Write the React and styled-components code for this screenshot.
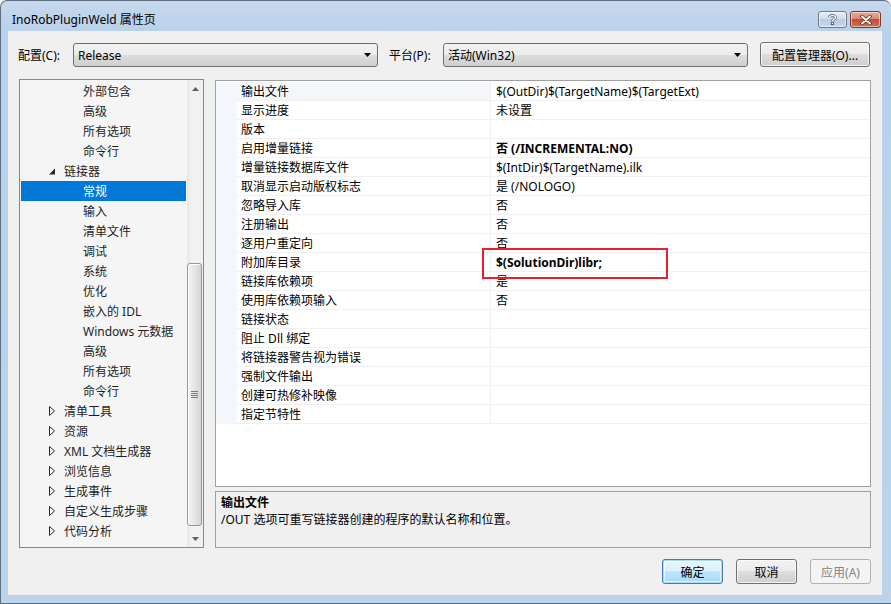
import React from "react";
import styled, { createGlobalStyle, css } from "styled-components";

const GlobalStyle = createGlobalStyle`
  html, body { margin: 0; padding: 0; background: #fff; }
  body {
    font-family: "Noto Sans", "Noto Sans CJK SC", sans-serif;
    font-size: 12px;
    color: #000;
  }
`;

const Window = styled.div`
  width: 891px;
  height: 604px;
  box-sizing: border-box;
  background: linear-gradient(#c6d8ed, #b9d1ea 30px, #bcd3ec);
  border: 1px solid #5d6e81;
  border-right: none;
  border-radius: 7px 7px 0 0;
  padding: 0 9px 8px 7px;
  display: flex;
  flex-direction: column;
`;

const TitleBar = styled.div`
  height: 30px;
  display: flex;
  align-items: flex-start;
`;

const Title = styled.div`
  flex: 1;
  padding: 10px 0 0 4px;
  line-height: 18px;
  font-size: 12px;
  color: #000;
`;

const CaptionButton = styled.div`
  margin-top: 10px;
  height: 17px;
  box-sizing: border-box;
  border: 1px solid #6d7b8c;
  border-radius: 3px;
  display: flex;
  align-items: center;
  justify-content: center;
  box-shadow: inset 0 0 0 1px rgba(255, 255, 255, 0.5);
  ${(p) =>
    p.$close
      ? css`
          width: 31px;
          margin-left: 3px;
          margin-right: 1px;
          background: linear-gradient(#e8a898, #d98c77 45%, #c34d32 50%, #d0725a);
          border-color: #7a3a2c;
        `
      : css`
          width: 29px;
          background: linear-gradient(#e4ecf6, #d2deec 45%, #b9cbe1 50%, #c9d8ea);
        `}
`;

const Client = styled.div`
  flex: 1;
  background: #f0f0f0;
  padding: 11px 11px 11px 11px;
  display: flex;
  flex-direction: column;
  min-height: 0;
`;

const ConfigRow = styled.div`
  height: 25px;
  display: flex;
  align-items: center;
`;

const FieldLabel = styled.div`
  width: ${(p) => p.$w}px;
  margin-left: ${(p) => p.$ml || 0}px;
  box-sizing: border-box;
  white-space: nowrap;
`;

const Combo = styled.div`
  width: 305px;
  height: 24px;
  box-sizing: border-box;
  border: 1px solid #707070;
  border-radius: 3px;
  background: linear-gradient(#f2f2f2, #ebebeb 50%, #dddddd 50%, #cfcfcf);
  display: flex;
  align-items: center;
  padding: 0 6px 0 4px;
  margin-top: 1px;
  span { flex: 1; }
`;

const Button = styled.div`
  width: ${(p) => p.$w || 61}px;
  height: 25px;
  margin-left: ${(p) => p.$ml || 0}px;
  box-sizing: border-box;
  border: 1px solid #707070;
  border-radius: 3px;
  background: linear-gradient(#f2f2f2, #ebebeb 50%, #dddddd 50%, #cfcfcf);
  box-shadow: inset 0 0 0 1px rgba(255, 255, 255, 0.7);
  display: flex;
  align-items: center;
  justify-content: center;
  white-space: nowrap;
  color: #000;
  ${(p) =>
    p.$primary &&
    css`
      border-color: #3c7fb1;
      background: linear-gradient(#eaf6fd, #d9f0fc 50%, #bee6fd 50%, #a7d9f5);
      box-shadow: inset 0 0 0 1px #a8dcf5, inset 0 0 0 2px rgba(255, 255, 255, 0.6);
    `}
  ${(p) =>
    p.$disabled &&
    css`
      border-color: #adb2b5;
      background: #f4f4f4;
      box-shadow: none;
      color: #838383;
    `}
`;

const Main = styled.div`
  flex: 1;
  min-height: 0;
  margin-top: 12px;
  display: flex;
`;

const Tree = styled.div`
  width: 185px;
  box-sizing: border-box;
  border: 1px solid #828790;
  background: #f5f5f5;
  display: flex;
`;

const TreeList = styled.div`
  flex: 1;
  padding: 1px 1px 0 1px;
  overflow: hidden;
`;

const TreeRow = styled.div`
  height: 20px;
  display: flex;
  align-items: center;
  padding-left: ${(p) => p.$indent}px;
  white-space: nowrap;
  color: ${(p) => (p.$selected ? "#fff" : "#1e1e1e")};
  background: ${(p) => (p.$selected ? "#0078d7" : "transparent")};
`;

const Expander = styled.span`
  width: 15px;
  display: flex;
  align-items: center;
`;

const ScrollBar = styled.div`
  width: 16px;
  display: flex;
  flex-direction: column;
  background: linear-gradient(to right, #e8e8e8, #f2f2f2 30%, #f0f0f0);
`;

const ScrollArrow = styled.div`
  height: ${(p) => p.$h}px;
  display: flex;
  align-items: center;
  justify-content: center;
`;

const ScrollTrack = styled.div`
  flex: 1;
  padding-top: 166px;
  box-sizing: border-box;
`;

const Thumb = styled.div`
  height: 263px;
  margin: 0 1px 0 0;
  box-sizing: border-box;
  border: 1px solid #979797;
  border-radius: 3px;
  background: linear-gradient(to right, #f4f4f4, #e6e6e6 50%, #d6d6d6);
  box-shadow: inset 1px 1px 0 #fff;
  display: flex;
  align-items: center;
  justify-content: center;
`;

const RightColumn = styled.div`
  flex: 1;
  margin-left: 11px;
  display: flex;
  flex-direction: column;
`;

const PropGrid = styled.div`
  position: relative;
  flex: 1;
  margin-top: 1px;
  border: 1px solid #a0a0a0;
  background: #fff;
  padding-top: 1px;
`;

const PropRow = styled.div`
  display: grid;
  grid-template-columns: 21px 253px 1fr;
  height: 19px;
`;

const Gutter = styled.div`
  background: #f3f6fb;
`;

const Cell = styled.div`
  box-sizing: border-box;
  border-bottom: 1px solid #f0f0f6;
  padding: 2px 0 0 ${(p) => (p.$value ? 5 : 4)}px;
  line-height: 16px;
  white-space: nowrap;
  overflow: hidden;
  font-weight: ${(p) => (p.$bold ? 700 : 400)};
  background: ${(p) => (p.$active ? "#f5f6f8" : "#fff")};
  ${(p) => p.$value && css`border-left: 1px solid #f0f0f6;`}
`;

const Highlight = styled.div`
  position: absolute;
  left: 266px;
  top: 167px;
  width: 186px;
  height: 31px;
  box-sizing: border-box;
  border: 2px solid #e8202a;
  pointer-events: none;
`;

const Desc = styled.div`
  height: 57px;
  margin-top: 4px;
  box-sizing: border-box;
  border: 1px solid #a0a0a0;
  background: #f0f0f0;
  padding: 2px 0 0 5px;
  line-height: 17px;
  h4 { margin: 0; font-size: 12px; font-weight: 700; }
  p { margin: 0; }
`;

const ButtonRow = styled.div`
  margin-top: 11px;
  height: 25px;
  display: flex;
  justify-content: flex-end;
`;

const treeItems = [
  { text: "外部包含", level: 2 },
  { text: "高级", level: 2 },
  { text: "所有选项", level: 2 },
  { text: "命令行", level: 2 },
  { text: "链接器", level: 1, open: true },
  { text: "常规", level: 2, selected: true },
  { text: "输入", level: 2 },
  { text: "清单文件", level: 2 },
  { text: "调试", level: 2 },
  { text: "系统", level: 2 },
  { text: "优化", level: 2 },
  { text: "嵌入的 IDL", level: 2 },
  { text: "Windows 元数据", level: 2 },
  { text: "高级", level: 2 },
  { text: "所有选项", level: 2 },
  { text: "命令行", level: 2 },
  { text: "清单工具", level: 1 },
  { text: "资源", level: 1 },
  { text: "XML 文档生成器", level: 1 },
  { text: "浏览信息", level: 1 },
  { text: "生成事件", level: 1 },
  { text: "自定义生成步骤", level: 1 },
  { text: "代码分析", level: 1 },
];

const props = [
  ["输出文件", "$(OutDir)$(TargetName)$(TargetExt)"],
  ["显示进度", "未设置"],
  ["版本", ""],
  ["启用增量链接", "否 (/INCREMENTAL:NO)", true],
  ["增量链接数据库文件", "$(IntDir)$(TargetName).ilk"],
  ["取消显示启动版权标志", "是 (/NOLOGO)"],
  ["忽略导入库", "否"],
  ["注册输出", "否"],
  ["逐用户重定向", "否"],
  ["附加库目录", "$(SolutionDir)libr;", true],
  ["链接库依赖项", "是"],
  ["使用库依赖项输入", "否"],
  ["链接状态", ""],
  ["阻止 Dll 绑定", ""],
  ["将链接器警告视为错误", ""],
  ["强制文件输出", ""],
  ["创建可热修补映像", ""],
  ["指定节特性", ""],
];

function DropArrow() {
  return (
    <svg width="7" height="4" viewBox="0 0 7 4">
      <polygon points="0,0 7,0 3.5,4" fill="#000" />
    </svg>
  );
}

function TreeItem({ item }) {
  if (item.level === 2) {
    return (
      <TreeRow $indent={62} $selected={item.selected}>
        {item.text}
      </TreeRow>
    );
  }
  return (
    <TreeRow $indent={28}>
      <Expander>
        {item.open ? (
          <svg width="7" height="7" viewBox="0 0 7 7">
            <polygon points="6,0.5 6,6.5 0,6.5" fill="#262626" />
          </svg>
        ) : (
          <svg width="7" height="10" viewBox="0 0 7 10">
            <polygon points="0.5,0.5 5.5,5 0.5,9.5" fill="#fff" stroke="#262626" strokeWidth="1" />
          </svg>
        )}
      </Expander>
      {item.text}
    </TreeRow>
  );
}

export default function App() {
  return (
    <>
      <GlobalStyle />
      <Window>
        <TitleBar>
          <Title>InoRobPluginWeld 属性页</Title>
          <CaptionButton>
            <svg width="9" height="11" viewBox="0 0 9 11">
              <path
                d="M1.5 3.2 C1.5 1.2 7.5 1 7.5 3.4 C7.5 5 4.5 5.2 4.5 7"
                fill="none"
                stroke="#3b4a5c"
                strokeWidth="2.6"
              />
              <path
                d="M1.5 3.2 C1.5 1.2 7.5 1 7.5 3.4 C7.5 5 4.5 5.2 4.5 7"
                fill="none"
                stroke="#fff"
                strokeWidth="1.4"
              />
              <rect x="3.3" y="8.2" width="2.4" height="2.4" fill="#fff" stroke="#3b4a5c" strokeWidth="0.8" />
            </svg>
          </CaptionButton>
          <CaptionButton $close>
            <svg width="12" height="10" viewBox="0 0 12 10">
              <path d="M2 1.5 L10 8.5 M10 1.5 L2 8.5" stroke="#5a2418" strokeWidth="3.4" strokeLinecap="round" />
              <path d="M2 1.5 L10 8.5 M10 1.5 L2 8.5" stroke="#fff" strokeWidth="2" strokeLinecap="round" />
            </svg>
          </CaptionButton>
        </TitleBar>
        <Client>
          <ConfigRow>
            <FieldLabel $w={55} $ml={-1}>配置(C):</FieldLabel>
            <Combo>
              <span>Release</span>
              <DropArrow />
            </Combo>
            <FieldLabel $w={54} $ml={11}>平台(P):</FieldLabel>
            <Combo>
              <span>活动(Win32)</span>
              <DropArrow />
            </Combo>
            <Button $w={110} $ml={12}>配置管理器(O)...</Button>
          </ConfigRow>
          <Main>
            <Tree>
              <TreeList>
                {treeItems.map((item, i) => (
                  <TreeItem key={i} item={item} />
                ))}
              </TreeList>
              <ScrollBar>
                <ScrollArrow $h={17}>
                  <svg width="7" height="4" viewBox="0 0 7 4">
                    <polygon points="0,4 7,4 3.5,0" fill="#606060" />
                  </svg>
                </ScrollArrow>
                <ScrollTrack>
                  <Thumb>
                    <svg width="7" height="8" viewBox="0 0 7 8">
                      <path d="M0 0.5 H7 M0 2.5 H7 M0 4.5 H7 M0 6.5 H7" stroke="#7a7a7a" strokeWidth="1" />
                    </svg>
                  </Thumb>
                </ScrollTrack>
                <ScrollArrow $h={17}>
                  <svg width="7" height="4" viewBox="0 0 7 4">
                    <polygon points="0,0 7,0 3.5,4" fill="#606060" />
                  </svg>
                </ScrollArrow>
              </ScrollBar>
            </Tree>
            <RightColumn>
              <PropGrid>
                {props.map(([name, value, bold], i) => (
                  <PropRow key={i}>
                    <Gutter />
                    <Cell $active={i === 0}>{name}</Cell>
                    <Cell $value $bold={bold}>{value}</Cell>
                  </PropRow>
                ))}
                <Highlight />
              </PropGrid>
              <Desc>
                <h4>输出文件</h4>
                <p>/OUT 选项可重写链接器创建的程序的默认名称和位置。</p>
              </Desc>
            </RightColumn>
          </Main>
          <ButtonRow>
            <Button $primary>确定</Button>
            <Button $ml={13}>取消</Button>
            <Button $ml={13} $disabled>应用(A)</Button>
          </ButtonRow>
        </Client>
      </Window>
    </>
  );
}
